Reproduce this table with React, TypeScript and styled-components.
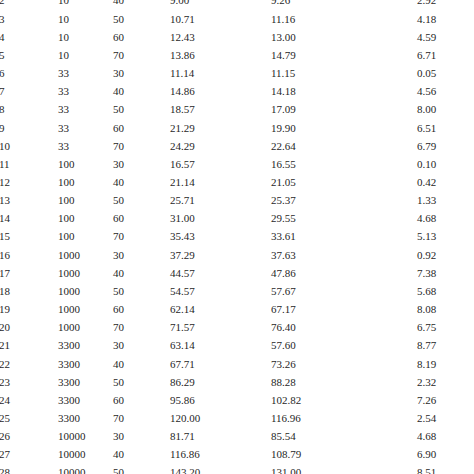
import styled, { createGlobalStyle } from "styled-components";

const GlobalStyle = createGlobalStyle`
  html, body {
    margin: 0;
    padding: 0;
    background: #ffffff;
    overflow: hidden;
  }
`;

const Page = styled.div`
  width: 474px;
  height: 474px;
  overflow: hidden;
  background: #ffffff;
`;

const Table = styled.div`
  margin-top: -8.6px;
  margin-left: -1px;
  display: grid;
  grid-template-columns: 59px 55px 57px 101px 146px 1fr;
  grid-auto-rows: 18.17px;
  font-family: "Liberation Serif", "Times New Roman", serif;
  font-size: 11px;
  line-height: 18.17px;
  color: #1f1f1f;
`;

const Cell = styled.div`
  white-space: nowrap;
`;

const rows: string[][] = [
  ["2", "10", "40", "9.00", "9.26", "2.92"],
  ["3", "10", "50", "10.71", "11.16", "4.18"],
  ["4", "10", "60", "12.43", "13.00", "4.59"],
  ["5", "10", "70", "13.86", "14.79", "6.71"],
  ["6", "33", "30", "11.14", "11.15", "0.05"],
  ["7", "33", "40", "14.86", "14.18", "4.56"],
  ["8", "33", "50", "18.57", "17.09", "8.00"],
  ["9", "33", "60", "21.29", "19.90", "6.51"],
  ["10", "33", "70", "24.29", "22.64", "6.79"],
  ["11", "100", "30", "16.57", "16.55", "0.10"],
  ["12", "100", "40", "21.14", "21.05", "0.42"],
  ["13", "100", "50", "25.71", "25.37", "1.33"],
  ["14", "100", "60", "31.00", "29.55", "4.68"],
  ["15", "100", "70", "35.43", "33.61", "5.13"],
  ["16", "1000", "30", "37.29", "37.63", "0.92"],
  ["17", "1000", "40", "44.57", "47.86", "7.38"],
  ["18", "1000", "50", "54.57", "57.67", "5.68"],
  ["19", "1000", "60", "62.14", "67.17", "8.08"],
  ["20", "1000", "70", "71.57", "76.40", "6.75"],
  ["21", "3300", "30", "63.14", "57.60", "8.77"],
  ["22", "3300", "40", "67.71", "73.26", "8.19"],
  ["23", "3300", "50", "86.29", "88.28", "2.32"],
  ["24", "3300", "60", "95.86", "102.82", "7.26"],
  ["25", "3300", "70", "120.00", "116.96", "2.54"],
  ["26", "10000", "30", "81.71", "85.54", "4.68"],
  ["27", "10000", "40", "116.86", "108.79", "6.90"],
  ["28", "10000", "50", "143.20", "131.00", "8.51"],
];

export default function App() {
  return (
    <Page>
      <GlobalStyle />
      <Table>
        {rows.map((row) =>
          row.map((value, i) => <Cell key={`${row[0]}-${i}`}>{value}</Cell>)
        )}
      </Table>
    </Page>
  );
}
